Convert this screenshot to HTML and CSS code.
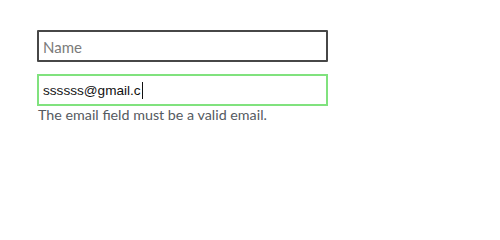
FILE: index.html
```html
<!DOCTYPE html>
<html>
<head>
<meta charset="utf-8">
<link rel="stylesheet" href="styles.css">
</head>
<body>
<form class="form">
  <input class="field field-name" type="text" placeholder="Name">
  <div class="group">
    <div class="field field-valid"><span class="value">ssssss@gmail.c</span><span class="caret"></span></div>
    <div class="error">The email field must be a valid email.</div>
  </div>
</form>
</body>
</html>
```
FILE: styles.css
```css
html, body {
  margin: 0;
  padding: 0;
  background: #ffffff;
}
.form {
  display: flex;
  flex-direction: column;
  gap: 12px;
  padding: 30px 0 0 37px;
  width: 291px;
}
.field {
  box-sizing: border-box;
  width: 291px;
  height: 32px;
  margin: 0;
  padding: 0 4px;
  font-family: "Liberation Sans", Arial, sans-serif;
  font-size: 13.6px;
  color: #111;
  background: #fff;
  outline: none;
  display: flex;
  align-items: center;
}
.field-name {
  border: 2px solid #474747;
  border-radius: 1px;
  font-family: Lato, "Open Sans", sans-serif;
  font-size: 15px;
  padding-top: 1px;
}
.field-name::placeholder {
  color: #7b7b7b;
}
.field-valid {
  border: 2px solid #80e27e;
  padding-top: 1px;
}
.caret {
  display: inline-block;
  width: 1px;
  height: 17px;
  background: #111;
  margin-left: 1px;
}
.group {
  display: flex;
  flex-direction: column;
}
.error {
  font-family: Lato, "Open Sans", sans-serif;
  font-size: 14.3px;
  line-height: 18px;
  color: #555a61;
  padding-left: 1px;
}
```
